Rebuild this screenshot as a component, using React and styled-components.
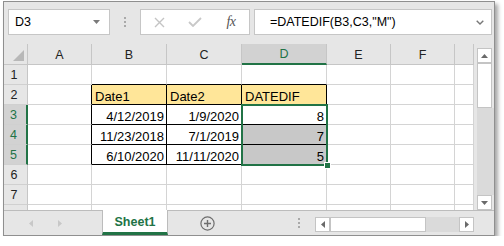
import React from 'react'
import styled, { createGlobalStyle, css } from 'styled-components'

const GREEN = '#217346'
const GRID = '#d4d4d4'
const CHROME = '#e6e6e6'
const HEAD_LINE = '#c6c6c6'

const GlobalStyle = createGlobalStyle`
    * { box-sizing: border-box; }
    body {
        margin: 0;
        background: #fff;
        font-family: "Liberation Sans", Arial, sans-serif;
    }
`

// every grid item sits at an explicit row / column so the selection frame can overlap them
const at = css`
    grid-row: ${(p) => p.$r};
    grid-column: ${(p) => p.$c};
`

const Window = styled.div`
    margin: 1px 0 0 3px;
    width: 492px;
    height: 235px;
    border: 1px solid #8f8f8f;
    background: ${CHROME};
    box-shadow: 3px 3px 4px rgba(0, 0, 0, 0.35);
    display: flex;
    flex-direction: column;
    overflow: hidden;
`

/* formula bar */
const FormulaBar = styled.div`
    height: 42px;
    flex: none;
    display: flex;
    align-items: flex-start;
    padding: 7px 2px 0 4px;
`
const Field = styled.div`
    height: 26px;
    background: #fff;
    border: 1px solid #c6c6c6;
    display: flex;
    align-items: center;
`
const NameBox = styled(Field)`
    width: 102px;
    padding: 0 9px 0 6px;
    justify-content: space-between;
    font-size: 12.5px;
    color: #000;
`
const Grip = styled.div`
    width: ${(p) => p.$w}px;
    align-self: ${(p) => p.$align || 'center'};
    display: flex;
    flex-direction: column;
    align-items: center;
    gap: 2px;
    padding-top: ${(p) => p.$top || 0}px;
    span {
        width: 2px;
        height: 2px;
        background: #a9a9a9;
    }
`
const FxBox = styled(Field)`
    width: 110px;
    margin-right: 4px;
`
const FxButton = styled.div`
    width: 36px;
    height: 100%;
    display: flex;
    align-items: center;
    justify-content: center;
`
const FxLabel = styled.span`
    font-family: "Liberation Serif", "Times New Roman", serif;
    font-style: italic;
    font-size: 14px;
    color: #555;
    letter-spacing: -0.5px;
`
const FormulaBox = styled(Field)`
    flex: 1;
    padding: 0 7px 0 15px;
    justify-content: space-between;
    font-size: 12.5px;
    color: #000;
`

/* sheet area */
const Body = styled.div`
    height: 166px;
    flex: none;
    display: flex;
`
const COLS = [24, 64, 75, 75, 85, 64, 64, 19]
const Sheet = styled.div`
    width: 470px;
    height: 166px;
    overflow: hidden;
    display: grid;
    grid-template-columns: ${COLS.map((w) => `${w}px`).join(' ')};
    grid-template-rows: 21px;
    grid-auto-rows: 20px;
    background: #fff;
`
const Corner = styled.div`
    ${at}
    background: ${CHROME};
    border-right: 1px solid ${HEAD_LINE};
    border-bottom: 1px solid ${HEAD_LINE};
    display: flex;
    align-items: flex-end;
    justify-content: flex-end;
    padding: 0 3px 3px 0;
`
const ColHead = styled.div`
    ${at}
    display: flex;
    align-items: center;
    justify-content: center;
    font-size: 12.5px;
    padding-top: 1px;
    background: ${(p) => (p.$active ? '#d2d2d2' : CHROME)};
    color: ${(p) => (p.$active ? GREEN : '#222')};
    border-right: 1px solid ${HEAD_LINE};
    border-bottom: ${(p) => (p.$active ? `2px solid ${GREEN}` : `1px solid ${HEAD_LINE}`)};
`
const RowHead = styled.div`
    ${at}
    display: flex;
    align-items: center;
    justify-content: center;
    padding-right: 3px;
    font-size: 12.5px;
    background: ${(p) => (p.$active ? '#d2d2d2' : CHROME)};
    color: ${(p) => (p.$active ? GREEN : '#222')};
    border-right: ${(p) => (p.$active ? `2px solid ${GREEN}` : `1px solid ${HEAD_LINE}`)};
    border-bottom: 1px solid #d0d0d0;
`
const Cell = styled.div`
    ${at}
    display: flex;
    align-items: flex-end;
    justify-content: ${(p) => (p.$right ? 'flex-end' : 'flex-start')};
    padding: 0 2px 1px 3px;
    font-size: 13px;
    line-height: 13px;
    color: #000;
    white-space: nowrap;
    overflow: hidden;
    background: ${(p) => p.$fill || '#fff'};
    border-right: 1px solid ${(p) => (p.$rb ? '#000' : GRID)};
    border-bottom: 1px solid ${(p) => (p.$bb ? '#000' : GRID)};
`
const Selection = styled.div`
    grid-column: 5;
    grid-row: 4 / 7;
    margin: -1px;
    border: 2px solid ${GREEN};
    position: relative;
    pointer-events: none;
`
const FillHandle = styled.div`
    position: absolute;
    right: -5px;
    bottom: -5px;
    width: 7px;
    height: 7px;
    background: ${GREEN};
    border: 1px solid #fff;
`

const VScroll = styled.div`
    width: 20px;
    display: flex;
    flex-direction: column;
    padding: 4px 0 0 3px;
`
const ScrollBtn = styled.div`
    width: ${(p) => p.$w || 15}px;
    height: ${(p) => p.$h || 15}px;
    flex: none;
    background: #fff;
    border: 1px solid #c4c4c4;
    display: flex;
    align-items: center;
    justify-content: center;
`
const Track = styled.div`
    flex: 1;
    background: #dadada;
`

/* sheet tabs */
const TabBar = styled.div`
    height: 25px;
    flex: none;
    display: flex;
    border-top: 1px solid #bcbcbc;
`
const Nav = styled.div`
    width: 98px;
    display: flex;
    align-items: center;
    padding-left: 25px;
    gap: 25px;
`
const Tab = styled.div`
    width: 66px;
    margin-top: -1px;
    background: #fff;
    border-left: 1px solid #bcbcbc;
    border-right: 1px solid #bcbcbc;
    border-bottom: 3px solid ${GREEN};
    display: flex;
    align-items: center;
    justify-content: center;
    color: ${GREEN};
    font-weight: bold;
    font-size: 12.5px;
    padding-top: 1px;
`
const AddArea = styled.div`
    flex: 1;
    display: flex;
    align-items: center;
    padding-left: 32px;
`
const HScroll = styled.div`
    width: 159px;
    margin-left: 8px;
    display: flex;
    align-self: flex-start;
    margin-top: 6px;
`
const HTrack = styled.div`
    flex: 1;
    background: #dadada;
`
const RightPad = styled.div`
    width: 20px;
`

const Tri = ({ dir, color = '#6a6a6a' }) => {
    const paths = {
        up: 'M0 4L3.5 0L7 4z',
        down: 'M0 0h7L3.5 4z',
        left: 'M4 0v7L0 3.5z',
        right: 'M0 0v7l4-3.5z',
    }
    const vertical = dir === 'up' || dir === 'down'
    return (
        <svg width={vertical ? 7 : 4} height={vertical ? 4 : 7} viewBox={vertical ? '0 0 7 4' : '0 0 4 7'}>
            <path d={paths[dir]} fill={color} />
        </svg>
    )
}

const ROWS = [
    [],
    ['', 'Date1', 'Date2', 'DATEDIF'],
    ['', '4/12/2019', '1/9/2020', '8'],
    ['', '11/23/2018', '7/1/2019', '7'],
    ['', '6/10/2020', '11/11/2020', '5'],
    [],
    [],
    [],
]
const LETTERS = ['A', 'B', 'C', 'D', 'E', 'F', 'G']
// only 5px of row 8 and 19px of column G show, so their labels are out of view
const VISIBLE_ROWS = 7

const renderRow = (cells, r) => {
    const rowNo = r + 1
    const gridRow = r + 2
    const out = [
        <RowHead key={`h${r}`} $r={gridRow} $c={1} $active={rowNo >= 3 && rowNo <= 5}>
            {rowNo <= VISIBLE_ROWS ? rowNo : ''}
        </RowHead>,
    ]
    LETTERS.forEach((_, c) => {
        const inTable = rowNo >= 2 && rowNo <= 5 && c >= 1 && c <= 3
        const rb = rowNo >= 2 && rowNo <= 5 && c <= 3
        const bb = rowNo >= 1 && rowNo <= 5 && c >= 1 && c <= 3
        let fill
        if (inTable && rowNo === 2) fill = '#ffe699'
        if (c === 3 && (rowNo === 4 || rowNo === 5)) fill = '#c8c8c8'
        out.push(
            <Cell
                key={`${r}-${c}`}
                $r={gridRow}
                $c={c + 2}
                $rb={rb}
                $bb={bb}
                $fill={fill}
                $right={rowNo >= 3}
            >
                {cells[c] || ''}
            </Cell>
        )
    })
    return out
}

const App = () => (
    <>
        <GlobalStyle />
        <Window>
            <FormulaBar>
                <NameBox>
                    <span>D3</span>
                    <Tri dir="down" color="#7a7a7a" />
                </NameBox>
                <Grip $w={30} $align="flex-start" $top={8}>
                    <span />
                    <span />
                    <span />
                </Grip>
                <FxBox>
                    <FxButton>
                        <svg width="11" height="11" viewBox="0 0 11 11">
                            <path d="M1 1L10 10M10 1L1 10" stroke="#c4c4c4" strokeWidth="1.4" />
                        </svg>
                    </FxButton>
                    <FxButton>
                        <svg width="14" height="10" viewBox="0 0 14 10">
                            <path d="M1 5L5 9L13 1" stroke="#c8c8c8" strokeWidth="1.8" fill="none" />
                        </svg>
                    </FxButton>
                    <FxButton>
                        <FxLabel>fx</FxLabel>
                    </FxButton>
                </FxBox>
                <FormulaBox>
                    <span>=DATEDIF(B3,C3,"M")</span>
                    <svg width="8" height="5" viewBox="0 0 8 5">
                        <path d="M0.7 0.7L4 4L7.3 0.7" stroke="#777" strokeWidth="1.4" fill="none" />
                    </svg>
                </FormulaBox>
            </FormulaBar>
            <Body>
                <Sheet>
                    <Corner $r={1} $c={1}>
                        <svg width="11" height="11" viewBox="0 0 11 11">
                            <path d="M11 0V11H0z" fill="#b8b8b8" />
                        </svg>
                    </Corner>
                    {LETTERS.map((l, i) => (
                        <ColHead key={l} $r={1} $c={i + 2} $active={l === 'D'}>
                            {l === 'G' ? '' : l}
                        </ColHead>
                    ))}
                    {ROWS.map(renderRow)}
                    <Selection>
                        <FillHandle />
                    </Selection>
                </Sheet>
                <VScroll>
                    <ScrollBtn>
                        <Tri dir="up" />
                    </ScrollBtn>
                    <ScrollBtn $h={45} />
                    <Track />
                    <ScrollBtn>
                        <Tri dir="down" />
                    </ScrollBtn>
                </VScroll>
            </Body>
            <TabBar>
                <Nav>
                    <Tri dir="left" color="#c8c8c8" />
                    <Tri dir="right" color="#c8c8c8" />
                </Nav>
                <Tab>Sheet1</Tab>
                <AddArea>
                    <svg width="15" height="15" viewBox="0 0 15 15">
                        <circle cx="7.5" cy="7.5" r="6.6" stroke="#6e6e6e" strokeWidth="1.2" fill="none" />
                        <path d="M7.5 4v7M4 7.5h7" stroke="#6e6e6e" strokeWidth="1.4" />
                    </svg>
                </AddArea>
                <Grip $w={16}>
                    <span />
                    <span />
                    <span />
                </Grip>
                <HScroll>
                    <ScrollBtn>
                        <Tri dir="left" />
                    </ScrollBtn>
                    <ScrollBtn $w={96} />
                    <HTrack />
                    <ScrollBtn>
                        <Tri dir="right" />
                    </ScrollBtn>
                </HScroll>
                <RightPad />
            </TabBar>
        </Window>
    </>
)

export default App
